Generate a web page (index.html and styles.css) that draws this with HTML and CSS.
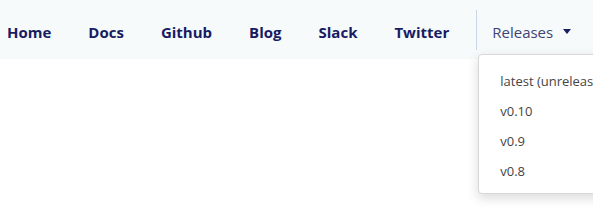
FILE: index.html
```html
<!DOCTYPE html>
<html>
<head>
<meta charset="utf-8">
<link rel="stylesheet" href="styles.css">
</head>
<body>
<nav class="navbar">
  <a class="nav-link" href="#">Home</a>
  <a class="nav-link" href="#">Docs</a>
  <a class="nav-link" href="#">Github</a>
  <a class="nav-link" href="#">Blog</a>
  <a class="nav-link" href="#">Slack</a>
  <a class="nav-link" href="#">Twitter</a>
  <div class="releases">
    <span class="releases-toggle">Releases <span class="caret"></span></span>
    <div class="dropdown">
      <a class="dropdown-item" href="#">latest (unreleased)</a>
      <a class="dropdown-item" href="#">v0.10</a>
      <a class="dropdown-item" href="#">v0.9</a>
      <a class="dropdown-item" href="#">v0.8</a>
    </div>
  </div>
</nav>
</body>
</html>
```
FILE: styles.css
```css
html, body {
  margin: 0;
  padding: 0;
  background: #ffffff;
  overflow: hidden;
}
body {
  font-family: "Open Sans", "Noto Sans", sans-serif;
  width: 593px;
  height: 214px;
}
.navbar {
  display: flex;
  align-items: center;
  gap: 37px;
  height: 59px;
  padding-left: 7px;
  background: #f6fafa;
  white-space: nowrap;
}
.nav-link {
  font-size: 15px;
  font-weight: 700;
  color: #171c63;
  text-decoration: none;
  padding-top: 4px;
}
.releases {
  position: relative;
  display: flex;
  align-items: center;
  height: 40px;
  margin-left: -10px;
  border-left: 1px solid #c9d7e6;
  padding-left: 15px;
}
.releases-toggle {
  font-size: 15px;
  color: #3f4473;
  padding-top: 4px;
  display: flex;
  align-items: center;
  gap: 10px;
}
.caret {
  width: 0;
  height: 0;
  border-left: 4px solid transparent;
  border-right: 4px solid transparent;
  border-top: 5px solid #171c63;
}
.dropdown {
  position: absolute;
  left: 1px;
  top: 44px;
  width: 160px;
  padding: 11px 0 7px;
  background: #ffffff;
  border: 1px solid #d8d8d8;
  border-radius: 4px;
  box-shadow: 0 4px 12px rgba(0, 0, 0, 0.15);
  display: flex;
  flex-direction: column;
}
.dropdown-item {
  display: block;
  height: 30px;
  line-height: 30px;
  padding-left: 21px;
  font-size: 13px;
  color: #444444;
  text-decoration: none;
}
```
